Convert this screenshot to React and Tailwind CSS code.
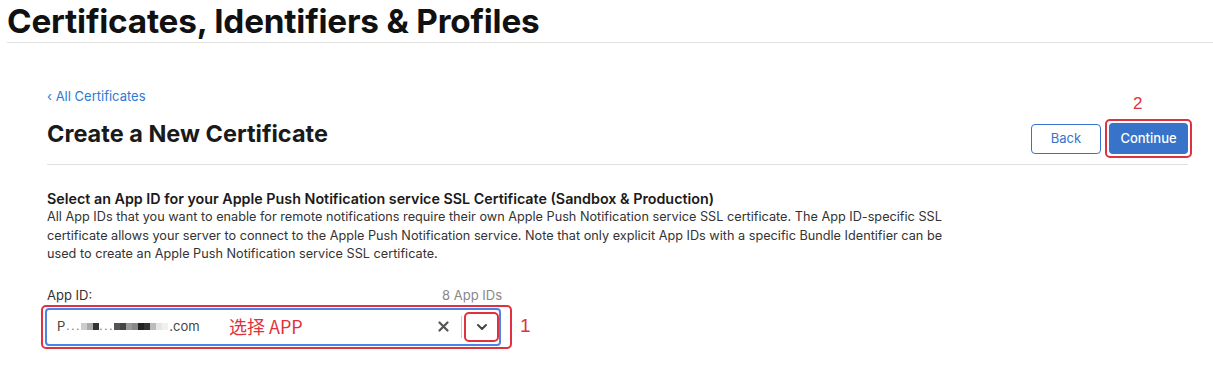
import React from 'react';

const RED = 'border-[#e0323e]';

const Mosaic = () => {
  // blurred part of the bundle id
  const cells = ['.', '.', '.', '#ccc', '#aaa', '#333', '.', '.', '.', '#555', '#444', '#999', '#888', '#222', '#333', '#bbb', '#e5e5e5', '#f0f0f0'];
  return (
    <span className="inline-flex items-center h-[10px] mx-[1px]">
      {cells.map((c, i) =>
        c === '.' ? (
          <span key={i} className="inline-block w-[5px] text-[11px] leading-none text-[#777]">.</span>
        ) : (
          <span key={i} className="inline-block w-[6px] h-[7px]" style={{ background: c }} />
        )
      )}
    </span>
  );
};

export default function App() {
  return (
    <div className="w-[1213px] h-[367px] bg-white overflow-hidden font-['Inter','Liberation_Sans',sans-serif] text-[#333]">
      {/* Page title */}
      <div className="pl-[7px]">
        <h1 className="text-[33.3px] leading-[40px] font-bold tracking-[-0.2px] text-[#111] pt-[1px] pb-[1px] border-b border-[#e2e2e2]">
          Certificates, Identifiers &amp; Profiles
        </h1>
      </div>

      <div className="pl-[47px] pr-[25px]">
        <div className="mt-[44px] text-[13px] leading-[18px] text-[#2d7bd3]">‹ All Certificates</div>

        <div className="flex items-end justify-between border-b border-[#e0e0e0] pb-[6px] mt-[14px]">
          <h2 className="text-[23.5px] leading-[28px] font-bold text-[#1a1a1a] pb-[10px]">Create a New Certificate</h2>
          <div className="flex items-center gap-[4px] mr-[-4px]">
            <button className="w-[70px] h-[30px] rounded-[4px] border border-[#3673c9] text-[13px] text-[#3673c9] bg-white">
              Back
            </button>
            <div className={`relative border-[2.5px] ${RED} rounded-[5px] p-[2px]`}>
              <span className="absolute left-[26px] -top-[27px] text-[17px] leading-[20px] text-[#e0323e] font-['Liberation_Sans',sans-serif]">
                2
              </span>
              <button className="w-[79px] h-[31px] rounded-[4px] bg-[#3673c9] text-[13px] font-medium text-white">
                Continue
              </button>
            </div>
          </div>
        </div>

        <h3 className="mt-[24px] text-[14.3px] leading-[19px] font-semibold text-[#1a1a1a]">
          Select an App ID for your Apple Push Notification service SSL Certificate (Sandbox &amp; Production)
        </h3>
        <p className="text-[12.7px] leading-[18.5px] text-[#333]">
          All App IDs that you want to enable for remote notifications require their own Apple Push Notification service SSL certificate. The App ID-specific SSL
          <br />
          certificate allows your server to connect to the Apple Push Notification service. Note that only explicit App IDs with a specific Bundle Identifier can be
          <br />
          used to create an Apple Push Notification service SSL certificate.
        </p>

        <div className="w-[456px] mt-[23px]">
          <div className="flex items-end justify-between text-[13px] leading-[16px]">
            <span className="text-[#333]">App ID:</span>
            <span className="text-[#888] mr-[1px]">8 App IDs</span>
          </div>
          <div className="flex items-center mt-[2px]">
            <div className={`relative border-[2.5px] ${RED} rounded-[5px] pl-[2px] pr-[9px] py-[1px] ml-[-6px]`}>
              <div className="w-[456px] h-[38px] rounded-[4px] border-2 border-[#4d82e6] flex items-center bg-white">
                <span className="pl-[10px] text-[13px] text-[#444] flex items-center w-[182px]">
                  P<Mosaic />.com
                </span>
                <span className="text-[18px] text-[#e0323e] font-['Noto_Sans_CJK_SC','Liberation_Sans',sans-serif]">
                  选择 APP
                </span>
                <span className="ml-auto mr-[12px] text-[#555]">
                  <svg width="11" height="11" viewBox="0 0 11 11">
                    <path d="M1.5 1.5 L9.5 9.5 M9.5 1.5 L1.5 9.5" stroke="#555" strokeWidth="2.2" strokeLinecap="round" />
                  </svg>
                </span>
                <span className="w-px h-[22px] bg-[#ccc]" />
                <div className={`w-[35px] h-[30px] ml-[2px] border-[2.5px] ${RED} rounded-[5px] flex items-center justify-center`}>
                  <svg width="12" height="8" viewBox="0 0 12 8">
                    <path d="M2 2 L6 6 L10 2" fill="none" stroke="#444" strokeWidth="2" strokeLinecap="round" strokeLinejoin="round" />
                  </svg>
                </div>
              </div>
            </div>
            <span className="ml-[8px] text-[19px] text-[#e0323e] font-['Liberation_Sans',sans-serif]">1</span>
          </div>
        </div>
      </div>
    </div>
  );
}
